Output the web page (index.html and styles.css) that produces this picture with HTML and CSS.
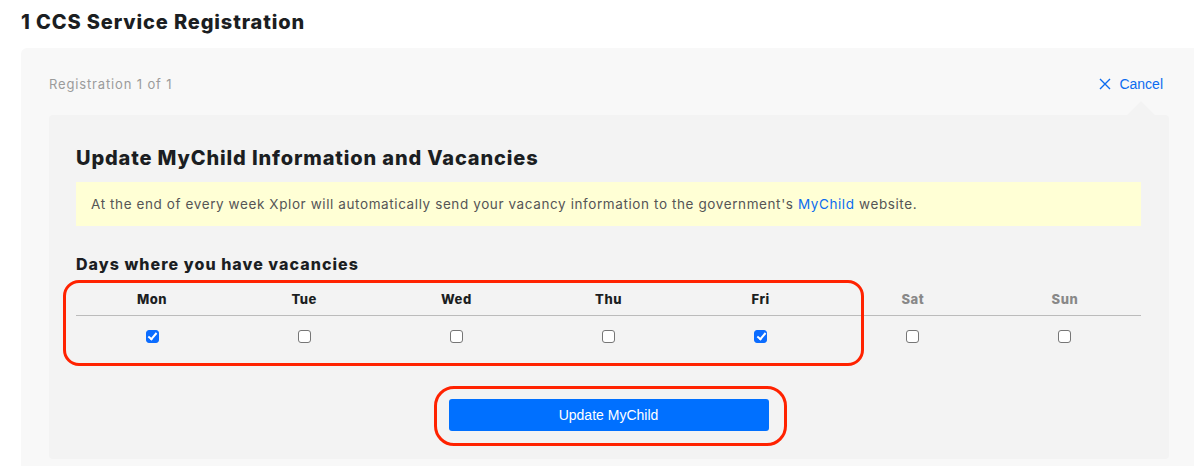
FILE: index.html
```html
<!DOCTYPE html>
<html>
<head>
<meta charset="utf-8">
<link rel="stylesheet" href="styles.css">
</head>
<body>
<h1 class="page-title">1 CCS Service Registration</h1>
<div class="panel">
  <div class="panel-head">
    <span class="reg-count">Registration 1 of 1</span>
    <a class="cancel" href="#"><svg class="cancel-x" width="12" height="12" viewBox="0 0 12 12"><path d="M1 1L11 11M11 1L1 11" stroke="currentColor" stroke-width="1.4" fill="none"/></svg>Cancel</a>
  </div>
  <div class="card">
    <h2 class="card-title">Update MyChild Information and Vacancies</h2>
    <div class="notice">At the end of every week Xplor will automatically send your vacancy information to the government's <a href="#">MyChild</a> website.</div>
    <h3 class="days-title">Days where you have vacancies</h3>
    <div class="days">
      <div class="day-h">Mon</div>
      <div class="day-h">Tue</div>
      <div class="day-h">Wed</div>
      <div class="day-h">Thu</div>
      <div class="day-h">Fri</div>
      <div class="day-h muted">Sat</div>
      <div class="day-h muted">Sun</div>
      <div class="day-c"><span class="cb on"></span></div>
      <div class="day-c"><span class="cb"></span></div>
      <div class="day-c"><span class="cb"></span></div>
      <div class="day-c"><span class="cb"></span></div>
      <div class="day-c"><span class="cb on"></span></div>
      <div class="day-c"><span class="cb"></span></div>
      <div class="day-c"><span class="cb"></span></div>
    </div>
    <div class="actions"><button class="btn">Update MyChild</button></div>
    <div class="mark mark-days"></div>
    <div class="mark mark-btn"></div>
  </div>
</div>
</body>
</html>
```
FILE: styles.css
```css
* { box-sizing: border-box; }
html, body { margin: 0; padding: 0; background: #fff; overflow: hidden; }
body { font-family: Inter, "Noto Sans", sans-serif; color: #1b1e22; }

.page-title {
  margin: 8px 0 0 21px;
  font-size: 20px;
  line-height: 28px;
  font-weight: 800;
  letter-spacing: 0.87px;
}

.panel {
  margin: 12px -20px 0 21px;
  padding: 0 45px 0 28px;
  background: #f8f8f8;
  border-radius: 6px 6px 0 0;
  height: 418px;
  overflow: hidden;
}

.panel-head {
  display: flex;
  justify-content: space-between;
  align-items: center;
  padding: 26px 6px 21px 0;
  line-height: 20px;
}
.reg-count { color: #9b9b9b; font-size: 13px; letter-spacing: 0.85px; }
.cancel {
  display: flex; align-items: center; gap: 8px;
  color: #0b6cf0; text-decoration: none;
  font-family: "Liberation Sans", Arial, sans-serif; font-size: 14px;
}
.cancel-x { display: block; }

.card {
  position: relative;
  background: #f3f3f3;
  border-radius: 4px;
  padding: 31px 28px 28px 27px;
}
.card::before {
  content: "";
  position: absolute;
  top: -14px; right: 14px;
  border-left: 14px solid transparent;
  border-right: 14px solid transparent;
  border-bottom: 14px solid #f3f3f3;
}
.card-title { margin: 0; font-size: 20px; line-height: 24px; font-weight: 800; letter-spacing: 0.85px; }

.notice {
  margin-top: 12px;
  background: #ffffd5;
  padding: 0 15px;
  line-height: 44px;
  font-size: 13.5px;
  color: #555;
  letter-spacing: 0.6px;
}
.notice a { color: #0b6cf0; text-decoration: none; }

.days-title { margin: 28px 0 0; font-size: 16px; line-height: 20px; font-weight: 800; letter-spacing: 1.05px; }

.days {
  margin-top: 9px;
  display: grid;
  grid-template-columns: repeat(7, 1fr);
}
.day-h {
  height: 33px;
  border-bottom: 1px solid #bbb;
  text-align: center;
  font-size: 13px; font-weight: 800;
  letter-spacing: 0.5px;
  line-height: 32px;
}
.day-h.muted { color: #888; }
.day-c { height: 40px; display: flex; align-items: center; justify-content: center; }
.cb {
  width: 13px; height: 13px;
  border: 1px solid #767676;
  border-radius: 3px;
  background: #fff;
  position: relative;
}
.cb.on { background: #0b6cff; border-color: #0b6cff; }
.cb.on::after {
  content: "";
  position: absolute;
  left: 3.5px; top: 0.5px;
  width: 3px; height: 7px;
  border: solid #fff;
  border-width: 0 2px 2px 0;
  transform: rotate(40deg);
}

.actions { margin-top: 43px; display: flex; justify-content: center; }
.btn {
  width: 320px; height: 32px;
  background: #0070ff; color: #fff;
  border: 0; border-radius: 3px;
  font-family: "Liberation Sans", Arial, sans-serif; font-size: 14px;
}

.mark { position: absolute; border: 3px solid #ff2200; }
.mark-days { left: 14px; top: 165px; width: 801px; height: 86px; border-radius: 16px; }
.mark-btn { left: 385px; top: 271px; width: 353px; height: 60px; border-radius: 20px; }
```
